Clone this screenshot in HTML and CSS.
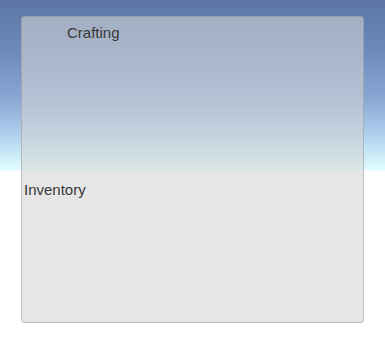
FILE: index.html
```html
<!DOCTYPE html>
<html>
<head>
<meta charset="utf-8">
<link rel="stylesheet" href="styles.css">
</head>
<body>
<div class="scene">
  <div class="panel">
    <div class="crafting">Crafting</div>
    <div class="inventory">Inventory</div>
  </div>
</div>
</body>
</html>
```
FILE: styles.css
```css
html, body {
  margin: 0;
  padding: 0;
}
body {
  width: 385px;
  height: 345px;
  overflow: hidden;
  font-family: "Liberation Sans", Arial, sans-serif;
  background: linear-gradient(to bottom,
    #5b76a4 0px,
    #6d89ba 50px,
    #87a4d2 95px,
    #a6c4e6 125px,
    #c6e6f6 152px,
    #e2fdff 170px,
    #ffffff 171px,
    #ffffff 345px);
}
.scene {
  padding: 16px 0 0 21px;
}
.panel {
  box-sizing: border-box;
  width: 343px;
  height: 307px;
  background: rgba(212, 212, 212, 0.58);
  border: 1px solid rgba(140, 140, 140, 0.45);
  border-radius: 4px;
  display: flex;
  flex-direction: column;
}
.crafting {
  font-size: 15px;
  line-height: 17px;
  color: #383838;
  padding: 7px 0 0 45px;
  height: 164px;
  box-sizing: border-box;
}
.inventory {
  font-size: 15px;
  line-height: 17px;
  color: #383838;
  padding-left: 2px;
}
```
